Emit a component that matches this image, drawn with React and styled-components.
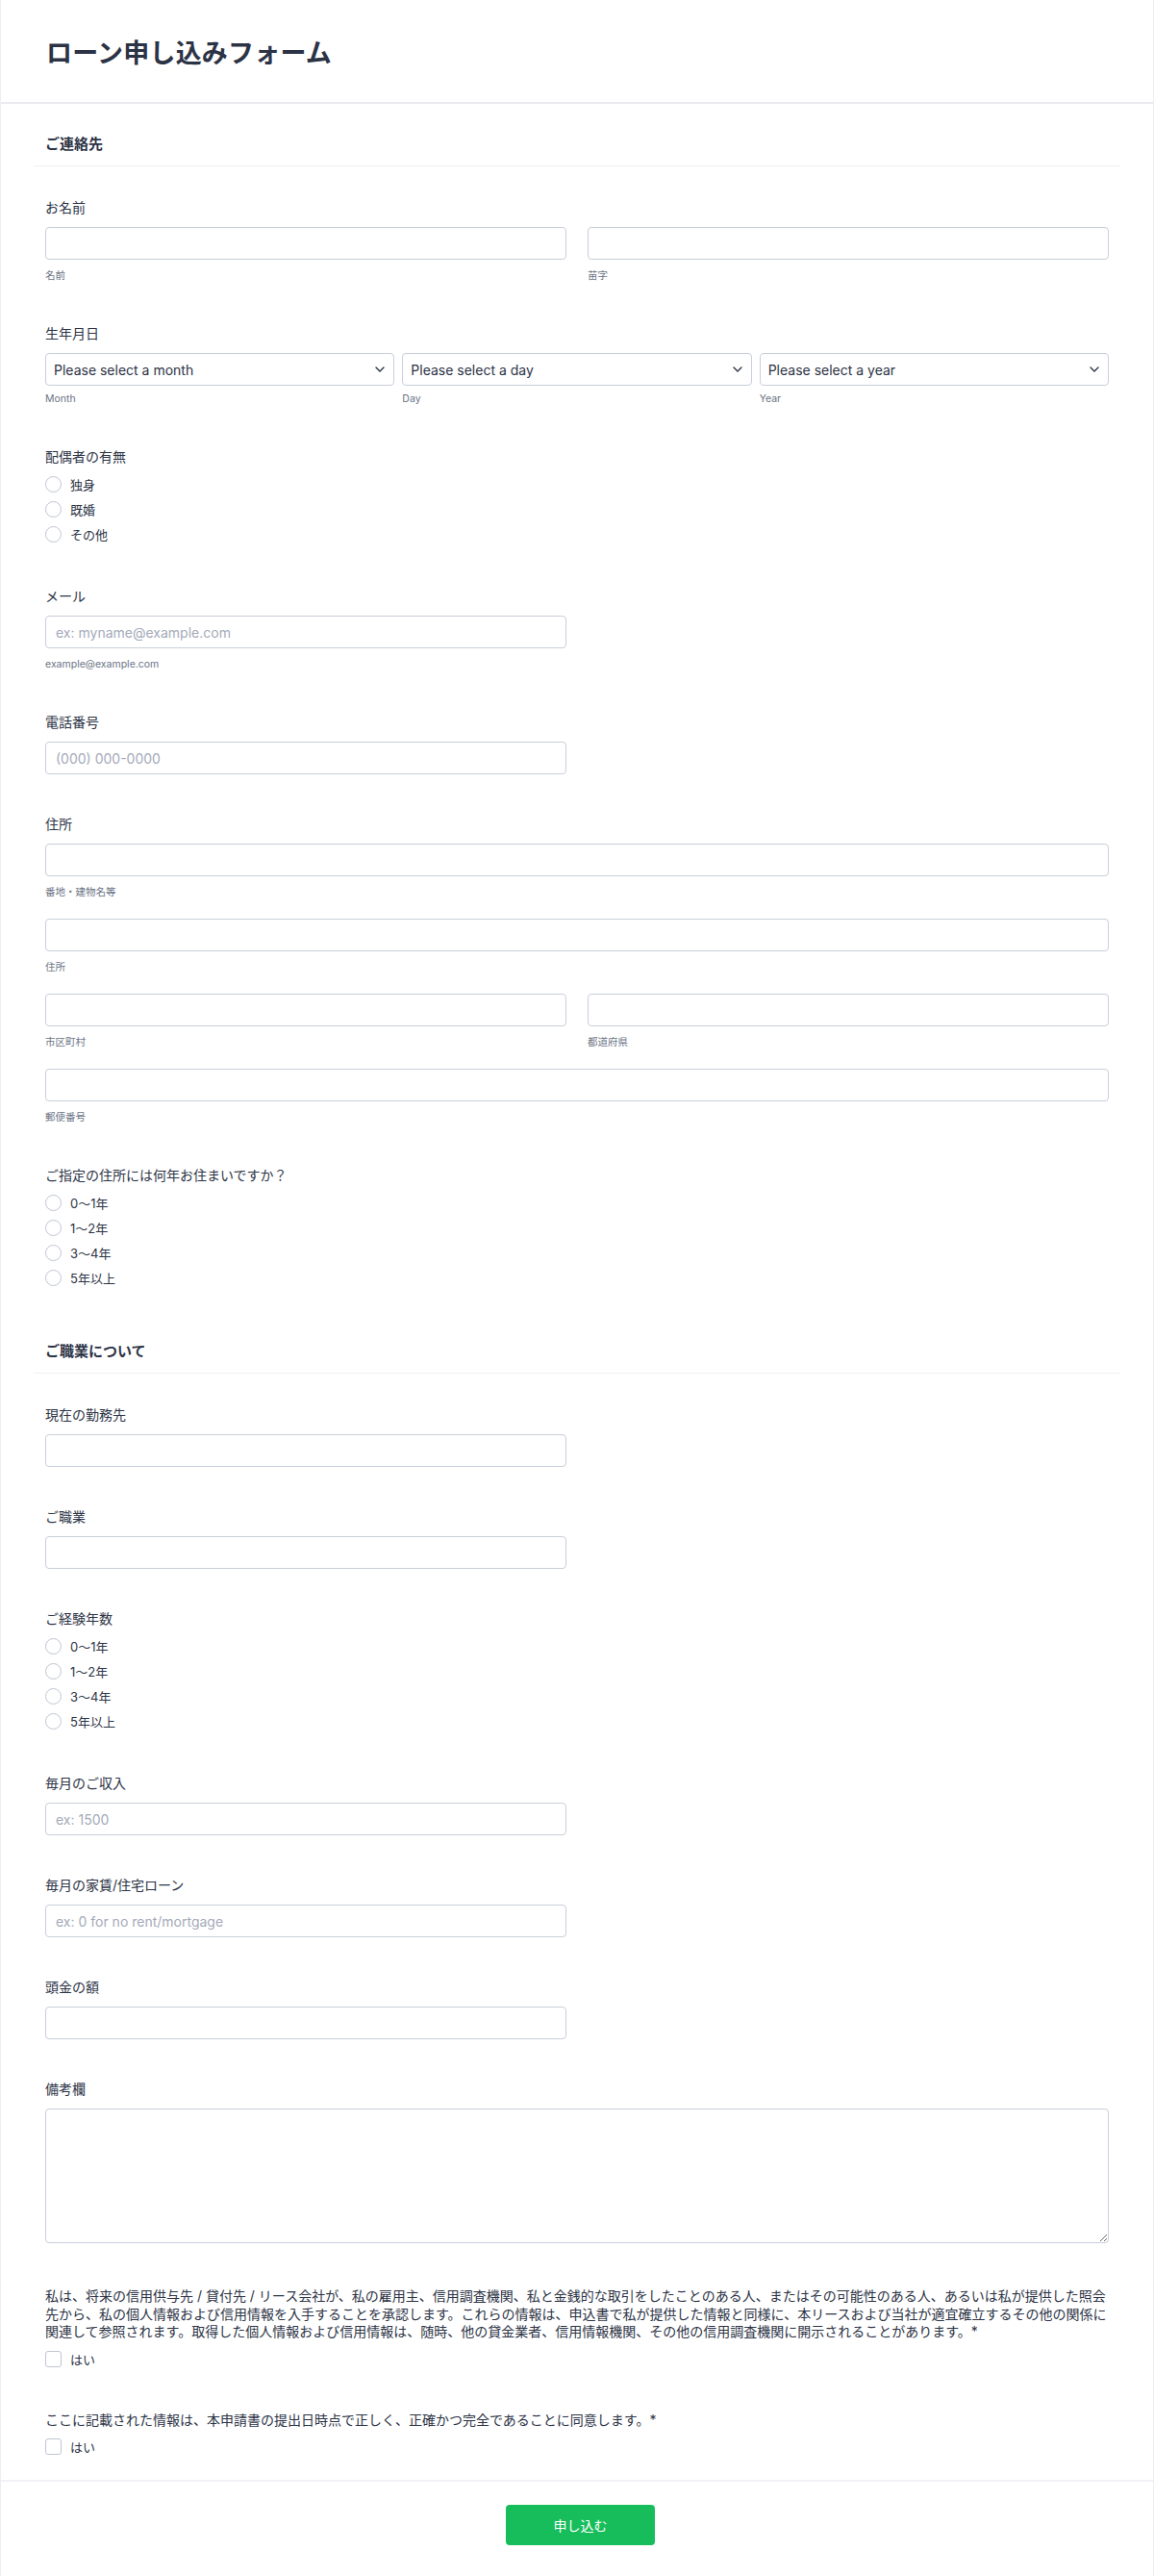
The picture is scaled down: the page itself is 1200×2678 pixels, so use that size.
import React from "react";
import styled, { createGlobalStyle } from "styled-components";

const GlobalStyle = createGlobalStyle`
  * { box-sizing: border-box; }
  body {
    margin: 0;
    background: #fff;
    font-family: Inter, "Noto Sans CJK JP", "Noto Sans", sans-serif;
    color: #2c3345;
  }
`;

const Page = styled.form`
  width: 1200px;
  background: #fff;
  border-left: 1px solid #eceef3;
  border-right: 1px solid #eceef3;
`;

const Header = styled.header`
  height: 108px;
  display: flex;
  align-items: center;
  padding: 0 47px;
  border-bottom: 2px solid #eaebf0;
`;

const Title = styled.h1`
  margin: 0;
  font-size: 27px;
  font-weight: 700;
  color: #2c3345;
  letter-spacing: 0.2px;
`;

const Body = styled.div`
  padding: 0 34px;
`;

const SectionTitle = styled.h2`
  margin: 0 0 13px;
  padding: 31px 12px 11px;
  font-size: 15px;
  line-height: 22px;
  font-weight: 700;
  color: #2c3345;
  border-bottom: 1px solid #eef0f4;
`;

const Field = styled.div`
  padding: 20px 12px 22px;
`;

const Label = styled.div`
  font-size: 14px;
  line-height: 20px;
  color: #2c3345;
  margin-bottom: 10px;
`;

const Row = styled.div`
  display: grid;
  grid-template-columns: ${(p) => `repeat(${p.cols}, 1fr)`};
  column-gap: ${(p) => p.gap}px;
`;

const Cell = styled.div`
  display: flex;
  flex-direction: column;
  margin-bottom: ${(p) => (p.last ? 0 : 19)}px;
`;

const Input = styled.input`
  display: block;
  width: ${(p) => (p.half ? "calc(50% - 11px)" : "100%")};
  height: 34px;
  padding: 0 10px;
  border: 1px solid #c8ceda;
  border-radius: 4px;
  background: #fff;
  font-family: inherit;
  font-size: 14px;
  color: #2c3345;
  outline: none;
  &::placeholder {
    color: #a4aab9;
  }
`;

const Sublabel = styled.span`
  display: block;
  margin-top: ${(p) => (p.tight ? 6 : 9)}px;
  font-size: 10.5px;
  line-height: 16px;
  color: #6b7385;
`;

const SelectWrap = styled.div`
  position: relative;
  height: 34px;
`;

const Select = styled.select`
  appearance: none;
  width: 100%;
  height: 34px;
  padding: 0 28px 0 8px;
  border: 1px solid #c8ceda;
  border-radius: 4px;
  background: #fff;
  font-family: inherit;
  font-size: 14px;
  color: #2c3345;
  outline: none;
`;

const Chevron = styled.svg`
  position: absolute;
  right: 10px;
  top: 14px;
  pointer-events: none;
`;

const Options = styled.div`
  display: flex;
  flex-direction: column;
  gap: 9px;
  margin-bottom: 4px;
`;

const Option = styled.label`
  display: flex;
  align-items: center;
  height: 17px;
  gap: 9px;
  font-size: 13px;
  color: #2c3345;
`;

const Radio = styled.span`
  width: 17px;
  height: 17px;
  border-radius: 50%;
  border: 1px solid #bfc5d2;
  background: #fff;
  flex-shrink: 0;
`;

const Box = styled.span`
  width: 17px;
  height: 17px;
  border-radius: 3px;
  border: 1px solid #bfc5d2;
  background: #fff;
  flex-shrink: 0;
`;

const TextArea = styled.textarea`
  display: block;
  width: 100%;
  height: 140px;
  margin-bottom: 4px;
  border: 1px solid #c8ceda;
  border-radius: 4px;
  font-family: inherit;
  font-size: 14px;
  outline: none;
`;

const Terms = styled.p`
  margin: 0 0 10px;
  font-size: 14px;
  line-height: 18.5px;
  color: #2c3345;
`;

const Footer = styled.footer`
  border-top: 2px solid #f1f2f6;
  padding: 24px 0 32px 7px;
  display: flex;
  justify-content: center;
`;

const SubmitButton = styled.button`
  width: 155px;
  height: 42px;
  border: none;
  border-radius: 4px;
  background: #18bd5b;
  color: #fff;
  font-family: inherit;
  font-size: 14px;
`;

const DateSelect = ({ text, sub }) => (
  <div>
    <SelectWrap>
      <Select defaultValue="">
        <option value="">{text}</option>
      </Select>
      <Chevron width="10" height="6" viewBox="0 0 10 6">
        <path d="M1 1l4 4 4-4" fill="none" stroke="#2c3345" strokeWidth="1.4" strokeLinecap="round" strokeLinejoin="round" />
      </Chevron>
    </SelectWrap>
    <Sublabel tight>{sub}</Sublabel>
  </div>
);

const RadioGroup = ({ label, items }) => (
  <Field>
    <Label>{label}</Label>
    <Options>
      {items.map((it) => (
        <Option key={it}>
          <Radio />
          {it}
        </Option>
      ))}
    </Options>
  </Field>
);

const TextField = ({ label, placeholder, sub }) => (
  <Field>
    <Label>{label}</Label>
    <Input half placeholder={placeholder} />
    {sub && <Sublabel>{sub}</Sublabel>}
  </Field>
);

const Consent = ({ children }) => (
  <Field>
    <Terms>{children}</Terms>
    <Options>
      <Option>
        <Box />
        はい
      </Option>
    </Options>
  </Field>
);

const years = ["0〜1年", "1〜2年", "3〜4年", "5年以上"];

export default function App() {
  return (
    <>
      <GlobalStyle />
      <Page onSubmit={(e) => e.preventDefault()}>
        <Header>
          <Title>ローン申し込みフォーム</Title>
        </Header>
        <Body>
          <SectionTitle>ご連絡先</SectionTitle>

          <Field>
            <Label>お名前</Label>
            <Row cols={2} gap={22}>
              <div>
                <Input />
                <Sublabel>名前</Sublabel>
              </div>
              <div>
                <Input />
                <Sublabel>苗字</Sublabel>
              </div>
            </Row>
          </Field>

          <Field>
            <Label>生年月日</Label>
            <Row cols={3} gap={8}>
              <DateSelect text="Please select a month" sub="Month" />
              <DateSelect text="Please select a day" sub="Day" />
              <DateSelect text="Please select a year" sub="Year" />
            </Row>
          </Field>

          <RadioGroup label="配偶者の有無" items={["独身", "既婚", "その他"]} />

          <TextField label="メール" placeholder="ex: myname@example.com" sub="example@example.com" />
          <TextField label="電話番号" placeholder="(000) 000-0000" />

          <Field>
            <Label>住所</Label>
            <Cell>
              <Input />
              <Sublabel>番地・建物名等</Sublabel>
            </Cell>
            <Cell>
              <Input />
              <Sublabel>住所</Sublabel>
            </Cell>
            <Row cols={2} gap={22}>
              <Cell>
                <Input />
                <Sublabel>市区町村</Sublabel>
              </Cell>
              <Cell>
                <Input />
                <Sublabel>都道府県</Sublabel>
              </Cell>
            </Row>
            <Cell last>
              <Input />
              <Sublabel>郵便番号</Sublabel>
            </Cell>
          </Field>

          <RadioGroup label="ご指定の住所には何年お住まいですか？" items={years} />

          <SectionTitle>ご職業について</SectionTitle>

          <TextField label="現在の勤務先" />
          <TextField label="ご職業" />
          <RadioGroup label="ご経験年数" items={years} />
          <TextField label="毎月のご収入" placeholder="ex: 1500" />
          <TextField label="毎月の家賃/住宅ローン" placeholder="ex: 0 for no rent/mortgage" />
          <TextField label="頭金の額" />

          <Field>
            <Label>備考欄</Label>
            <TextArea />
          </Field>

          <Consent>
            私は、将来の信用供与先 / 貸付先 / リース会社が、私の雇用主、信用調査機関、私と金銭的な取引をしたことのある人、またはその可能性のある人、あるいは私が提供した照会先から、私の個人情報および信用情報を入手することを承認します。これらの情報は、申込書で私が提供した情報と同様に、本リースおよび当社が適宜確立するその他の関係に関連して参照されます。取得した個人情報および信用情報は、随時、他の貸金業者、信用情報機関、その他の信用調査機関に開示されることがあります。*
          </Consent>

          <Consent>ここに記載された情報は、本申請書の提出日時点で正しく、正確かつ完全であることに同意します。*</Consent>
        </Body>
        <Footer>
          <SubmitButton type="submit">申し込む</SubmitButton>
        </Footer>
      </Page>
    </>
  );
}
